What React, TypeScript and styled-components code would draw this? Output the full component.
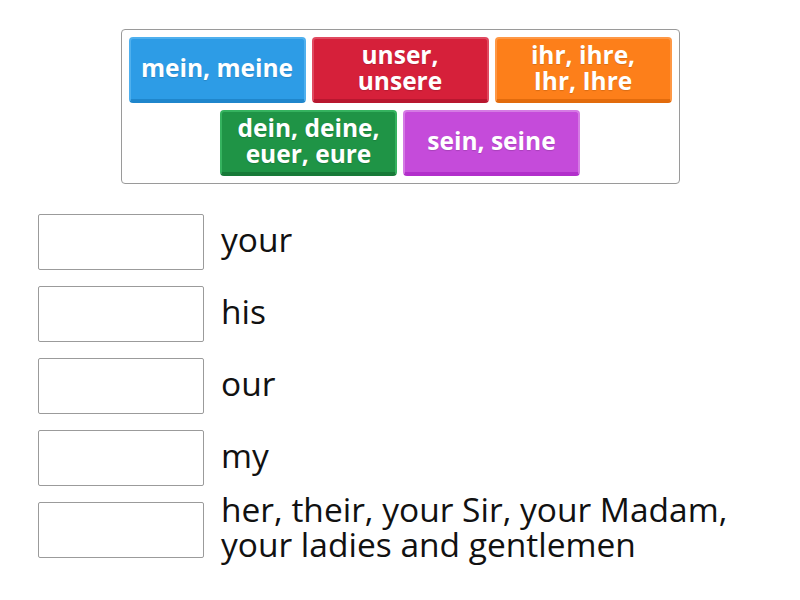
import React from "react"
import styled, { createGlobalStyle } from "styled-components"

const GlobalStyle = createGlobalStyle`
    body {
        margin: 0;
        background: #ffffff;
        font-family: "Open Sans", "Noto Sans", sans-serif;
    }
`

const Page = styled.div`
    width: 800px;
    height: 600px;
    padding-top: 29px;
    box-sizing: border-box;
    overflow: hidden;
`

const Bank = styled.div`
    width: 559px;
    margin: 0 auto;
    box-sizing: border-box;
    padding: 7px;
    border: 1px solid #9a9a9a;
    border-radius: 4px;
    display: flex;
    flex-wrap: wrap;
    justify-content: center;
    gap: 7px 6px;
`

const Tile = styled.div<{ $color: string; $light: string; $dark: string }>`
    width: 177px;
    height: 66px;
    box-sizing: border-box;
    border-radius: 4px;
    display: flex;
    align-items: center;
    justify-content: center;
    text-align: center;
    white-space: pre-line;
    color: #ffffff;
    font-weight: 700;
    font-size: 24.5px;
    line-height: 26px;
    padding: 0 4px 2px;
    background: ${(p) => p.$color};
    border-top: 2px solid ${(p) => p.$light};
    border-left: 2px solid ${(p) => p.$light};
    border-right: 2px solid ${(p) => p.$light};
    border-bottom: 4px solid ${(p) => p.$dark};
    text-shadow: 0 1px 1px rgba(0, 0, 0, 0.15);
`

const Targets = styled.div`
    margin-top: 30px;
    padding-left: 38px;
    display: flex;
    flex-direction: column;
    gap: 17px;
`

const Row = styled.div`
    height: 55px;
    display: flex;
    align-items: center;
    gap: 17px;
`

const Slot = styled.div`
    flex: 0 0 auto;
    width: 166px;
    height: 56px;
    box-sizing: border-box;
    border: 1px solid #9b9b9b;
    border-radius: 2px;
    background: #ffffff;
`

const Label = styled.div`
    font-size: 33.5px;
    line-height: 35px;
    padding-bottom: 5px;
    color: #111111;
    width: 530px;
`

const tiles = [
    { text: "mein, meine", color: "#2d9ce6", light: "#4fb0ee", dark: "#1f86cc" },
    { text: "unser,\nunsere", color: "#d6203a", light: "#e04a60", dark: "#b8172f" },
    { text: "ihr, ihre,\nIhr, Ihre", color: "#fd7f1a", light: "#fe9846", dark: "#e26b0c" },
    { text: "dein, deine,\neuer, eure", color: "#1f9446", light: "#35b35f", dark: "#177a38" },
    { text: "sein, seine", color: "#c54bda", light: "#d57ae4", dark: "#b22fcb" },
]

const labels = [
    "your",
    "his",
    "our",
    "my",
    "her, their, your Sir, your Madam, your ladies and gentlemen",
]

const App: React.FC = () => {
    return (
        <Page>
            <GlobalStyle />
            <Bank>
                {tiles.map((t) => (
                    <Tile key={t.text} $color={t.color} $light={t.light} $dark={t.dark}>
                        {t.text}
                    </Tile>
                ))}
            </Bank>
            <Targets>
                {labels.map((l) => (
                    <Row key={l}>
                        <Slot />
                        <Label>{l}</Label>
                    </Row>
                ))}
            </Targets>
        </Page>
    )
}

export default App
